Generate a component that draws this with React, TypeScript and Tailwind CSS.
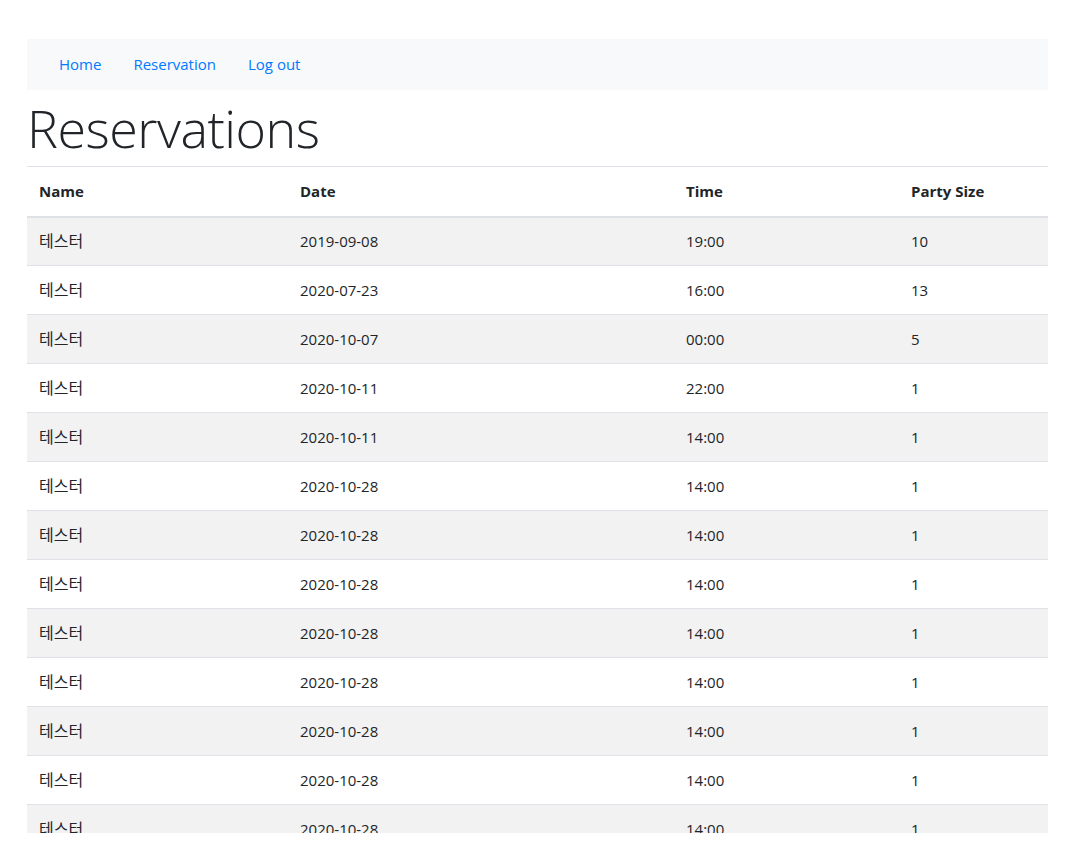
const rows = [
  ["2019-09-08", "19:00", "10"],
  ["2020-07-23", "16:00", "13"],
  ["2020-10-07", "00:00", "5"],
  ["2020-10-11", "22:00", "1"],
  ["2020-10-11", "14:00", "1"],
  ...Array.from({ length: 8 }, () => ["2020-10-28", "14:00", "1"]),
];

export default function App() {
  return (
    <div className="h-[833px] overflow-hidden bg-white pl-[27px] pr-[25px] pt-[39px] text-[#212529] font-['Open_Sans','Noto_Sans_CJK_KR',sans-serif]">
      <nav className="flex h-[51px] items-center gap-8 bg-[#f8f9fa] px-8 text-[15px] text-[#007bff]">
        <a href="#">Home</a>
        <a href="#">Reservation</a>
        <a href="#">Log out</a>
      </nav>
      <h1 className="h-[76px] pt-[2px] text-[52px] font-light leading-[72px] tracking-[-0.5px]">Reservations</h1>
      <table className="w-full border-collapse text-[15px]">
        <thead>
          <tr className="h-[50px] border-t border-b-2 border-[#dee2e6] text-left">
            <th className="w-[261px] px-3 font-bold">Name</th>
            <th className="w-[386px] px-3 font-bold">Date</th>
            <th className="w-[225px] px-3 font-bold">Time</th>
            <th className="px-3 font-bold">Party Size</th>
          </tr>
        </thead>
        <tbody>
          {rows.map((r, i) => (
            <tr key={i} className={`h-[49px] border-b border-[#dee2e6] ${i % 2 === 0 ? "bg-[#f2f2f2]" : "bg-white"}`}>
              <td className="px-3 text-[16px]">테스터</td>
              <td className="px-3">{r[0]}</td>
              <td className="px-3">{r[1]}</td>
              <td className="px-3">{r[2]}</td>
            </tr>
          ))}
        </tbody>
      </table>
    </div>
  );
}
